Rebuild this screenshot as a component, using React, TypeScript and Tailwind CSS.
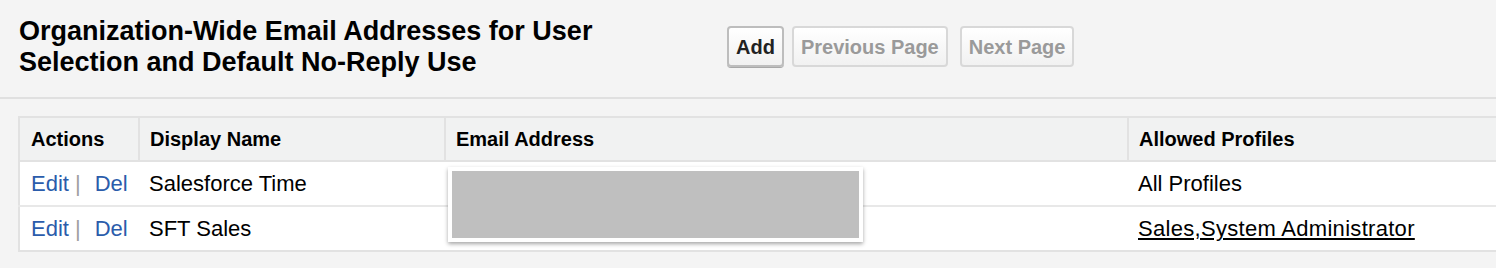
const rows = [
  { name: 'Salesforce Time', profiles: 'All Profiles', link: false },
  { name: 'SFT Sales', profiles: 'Sales,System Administrator', link: true }
];

function PageButton({
  label,
  disabled,
  className
}: {
  label: string;
  disabled?: boolean;
  className?: string;
}) {
  return (
    <button
      disabled={disabled}
      className={`h-[41px] px-[7px] rounded-[4px] border-2 bg-gradient-to-b from-white to-[#f1f1f1] text-[20px] font-bold ${
        disabled
          ? 'border-[#d8d8d8] text-[#9a9a9a]'
          : 'border-[#bdbdbd] text-[#222] shadow-[0_1px_0_#a8a8a8]'
      } ${className ?? ''}`}
    >
      {label}
    </button>
  );
}

export default function App() {
  return (
    <div
      className="w-[1496px] h-[268px] overflow-hidden bg-[#f4f4f4] text-black"
      style={{ fontFamily: '"Liberation Sans", Arial, sans-serif' }}
    >
      {/* Header */}
      <div className="h-[97px] flex items-center pl-[19px] pb-[4px]">
        <h1 className="w-[650px] text-[27px] leading-[31px] font-bold whitespace-nowrap">
          Organization-Wide Email Addresses for User
          <br />
          Selection and Default No-Reply Use
        </h1>
        <div className="flex items-center ml-[58px]">
          <PageButton label="Add" />
          <PageButton label="Previous Page" disabled className="ml-[8px]" />
          <PageButton label="Next Page" disabled className="ml-[12px]" />
        </div>
      </div>
      <div className="h-[2px] bg-[#e0e0e0]" />

      {/* Table */}
      <div className="relative pt-[17px] pl-[18px]">
        <table className="w-[1500px] border-collapse border-2 border-[#e2e2e2] text-[22px]">
          <thead>
            <tr className="bg-[#f1f2f2] h-[44px] text-[20px]">
              <th className="w-[120px] border-2 border-[#e2e2e2] text-left font-bold pl-[11px]">
                Actions
              </th>
              <th className="w-[306px] border-2 border-[#e2e2e2] text-left font-bold pl-[10px]">
                Display Name
              </th>
              <th className="w-[683px] border-2 border-[#e2e2e2] text-left font-bold pl-[10px]">
                Email Address
              </th>
              <th className="border-2 border-[#e2e2e2] text-left font-bold pl-[10px]">
                Allowed Profiles
              </th>
            </tr>
          </thead>
          <tbody className="bg-white">
            {rows.map((r) => (
              <tr key={r.name} className="h-[45px] border-t-2 border-[#e8e8e8]">
                <td className="pl-[11px] whitespace-nowrap">
                  <a href="#" className="text-[#2b5cab]">
                    Edit
                  </a>
                  <span className="text-[#a0a0a0] ml-[6px]">|</span>
                  <a href="#" className="text-[#2b5cab] ml-[14px]">
                    Del
                  </a>
                </td>
                <td className="pl-[10px]">{r.name}</td>
                <td className="pl-[10px]" />
                <td className="pl-[10px]">
                  {r.link ? (
                    <a href="#" className="underline underline-offset-2 tracking-[0.3px]">
                      {r.profiles}
                    </a>
                  ) : (
                    r.profiles
                  )}
                </td>
              </tr>
            ))}
          </tbody>
        </table>
        {/* Redaction overlay */}
        <div className="absolute left-[448px] top-[68px] w-[415px] h-[75px] bg-white p-[4px] shadow-[0_2px_4px_rgba(0,0,0,0.35)]">
          <div className="w-full h-full bg-[#bfbfbf]" />
        </div>
      </div>
    </div>
  );
}
